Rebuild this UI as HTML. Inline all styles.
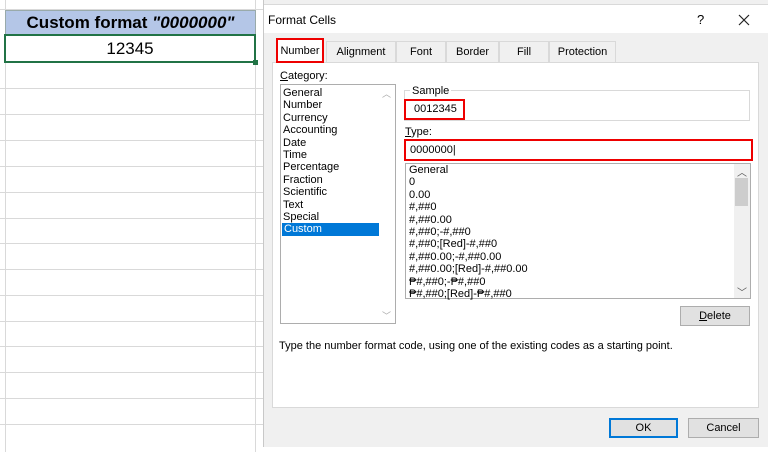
<!DOCTYPE html>
<html><head><style>
*{margin:0;padding:0;box-sizing:border-box}
body{width:768px;height:452px;position:relative;background:#fff;font-family:"Liberation Sans",sans-serif;font-size:11px;color:#000;overflow:hidden}
.a{position:absolute}
.hl{position:absolute;left:0;width:263px;height:1px;background:#d9d9d9}
.tab{position:absolute;top:41px;height:21px;border:1px solid #d9d9d9;border-bottom:none;background:#f0f0f0;text-align:center;line-height:20px;font-size:11px}
.li{line-height:12.4px;font-size:11px}
.btn{position:absolute;background:#e1e1e1;border:1px solid #adadad;text-align:center;line-height:18px;font-size:11px}
</style></head><body>
<div class="a" style="left:5px;top:0;width:1px;height:452px;background:#d9d9d9"></div>
<div class="a" style="left:255px;top:0;width:1px;height:452px;background:#d9d9d9"></div>
<div class="hl" style="top:88px"></div><div class="hl" style="top:114px"></div><div class="hl" style="top:140px"></div><div class="hl" style="top:166px"></div><div class="hl" style="top:192px"></div><div class="hl" style="top:218px"></div><div class="hl" style="top:243px"></div><div class="hl" style="top:269px"></div><div class="hl" style="top:295px"></div><div class="hl" style="top:321px"></div><div class="hl" style="top:346px"></div><div class="hl" style="top:372px"></div><div class="hl" style="top:398px"></div><div class="hl" style="top:424px"></div>
<div class="hl" style="top:9px"></div>
<div class="a" style="left:5px;top:10px;width:251px;height:25px;background:#b4c6e7;border:1px solid #9aa;font-weight:bold;font-size:17px;text-align:center;line-height:23px">Custom format <i>"0000000"</i></div>
<div class="a" style="left:4px;top:34px;width:252px;height:29px;border:2px solid #217346;text-align:center;font-size:17px;line-height:25px">12345</div>
<div class="a" style="left:253px;top:60px;width:5px;height:5px;background:#217346"></div>
<div class="a" style="left:263px;top:0;width:505px;height:447px;background:#f0f0f0;border-left:1px solid #c8c8c8"></div>
<div class="a" style="left:264px;top:4px;width:504px;height:29px;background:#fff;border-top:1px solid #d9d9d9"></div>
<div class="a" style="left:268px;top:13px;font-size:12px">Format Cells</div>
<div class="a" style="left:697px;top:12px;font-size:13px">?</div>
<svg class="a" style="left:738px;top:14px" width="12" height="12"><path d="M1 1L11 11M11 1L1 11" stroke="#222" stroke-width="1.2"/></svg>
<div class="a" style="left:272px;top:62px;width:487px;height:346px;background:#fff;border:1px solid #d9d9d9"></div>
<div class="tab" style="left:276px;top:38px;width:48px;height:25px;background:#fff;border:2px solid #e00;line-height:22px">Number</div>
<div class="tab" style="left:326px;width:70px">Alignment</div>
<div class="tab" style="left:396px;width:50px">Font</div>
<div class="tab" style="left:446px;width:53px">Border</div>
<div class="tab" style="left:499px;width:50px">Fill</div>
<div class="tab" style="left:549px;width:67px">Protection</div>
<div class="a" style="left:280px;top:70px"><u>C</u>ategory:</div>
<div class="a" style="left:280px;top:84px;width:116px;height:240px;border:1px solid #adadad;background:#fff"></div>
<div class="a li" style="left:283px;top:87px">General<br>Number<br>Currency<br>Accounting<br>Date<br>Time<br>Percentage<br>Fraction<br>Scientific<br>Text<br>Special</div>
<div class="a" style="left:282px;top:223px;width:97px;height:13px;background:#0078d7;color:#fff;padding-left:2px;line-height:13px">Custom</div>
<div class="a" style="left:382px;top:87px;color:#aaa;font-size:9px">︿</div>
<div class="a" style="left:382px;top:309px;color:#aaa;font-size:9px">﹀</div>
<div class="a" style="left:404px;top:90px;width:346px;height:31px;border:1px solid #d9d9d9"></div>
<div class="a" style="left:410px;top:85px;background:#fff;padding:0 2px">Sample</div>
<div class="a" style="left:404px;top:99px;width:61px;height:21px;border:2px solid #e00;padding-left:8px;line-height:17px">0012345</div>
<div class="a" style="left:405px;top:126px"><u>T</u>ype:</div>
<div class="a" style="left:404px;top:139px;width:349px;height:22px;border:2px solid #e00;padding-left:4px;line-height:18px">0000000|</div>
<div class="a" style="left:405px;top:163px;width:346px;height:136px;border:1px solid #adadad;background:#fff"></div>
<div class="a li" style="left:409px;top:164px">General<br>0<br>0.00<br>#,##0<br>#,##0.00<br>#,##0;-#,##0<br>#,##0;[Red]-#,##0<br>#,##0.00;-#,##0.00<br>#,##0.00;[Red]-#,##0.00<br>₱#,##0;-₱#,##0<br>₱#,##0;[Red]-₱#,##0</div>
<div class="a" style="left:734px;top:164px;width:16px;height:134px;background:#f0f0f0"></div>
<div class="a" style="left:735px;top:178px;width:13px;height:28px;background:#cdcdcd"></div>
<div class="a" style="left:737px;top:164px;font-size:10px;color:#555">︿</div>
<div class="a" style="left:737px;top:284px;font-size:10px;color:#555">﹀</div>
<div class="btn" style="left:680px;top:306px;width:70px;height:20px"><u>D</u>elete</div>
<div class="a" style="left:279px;top:340px">Type the number format code, using one of the existing codes as a starting point.</div>
<div class="btn" style="left:609px;top:418px;width:69px;height:20px;border:2px solid #0078d7;line-height:16px">OK</div>
<div class="btn" style="left:688px;top:418px;width:71px;height:20px">Cancel</div>
</body></html>
